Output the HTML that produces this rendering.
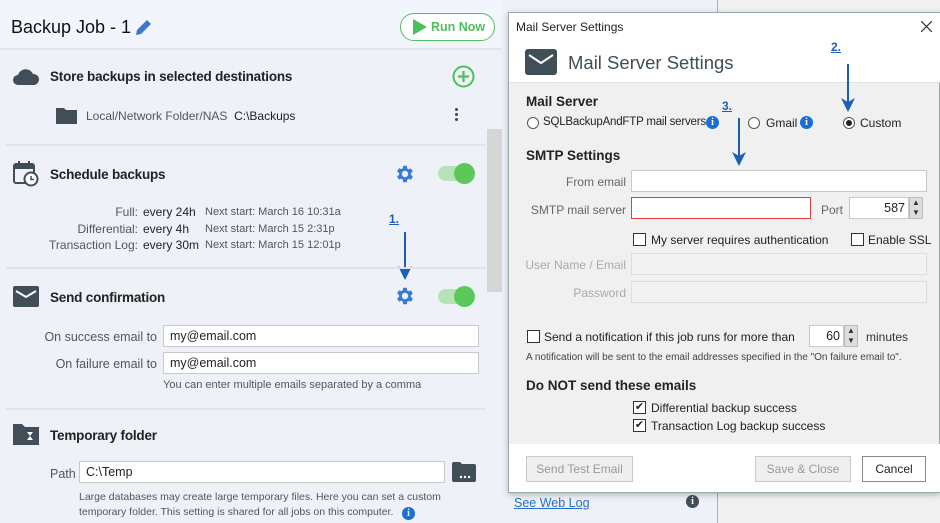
<!DOCTYPE html><html><head><style>
*{margin:0;padding:0;box-sizing:border-box}
body{width:940px;height:523px;position:relative;overflow:hidden;font-family:"Liberation Sans",sans-serif;background:#f0f0f0;color:#222}
.a{position:absolute}
.t{font-size:12px;color:#555;white-space:nowrap}
.h{font-size:13.5px;font-weight:bold;color:#222;white-space:nowrap;letter-spacing:-0.2px}
.inp{position:absolute;background:#fff;border:1px solid #c8c8c8;height:22px;font-size:12.5px;padding:3px 6px}
.sep{position:absolute;left:6px;width:480px;height:2px;background:#dfe4ea}
.dl{font-size:12px;color:#666;white-space:nowrap;text-align:right}
.cb{position:absolute;width:13px;height:13px;border:1px solid #333;background:#fff}
.rd{position:absolute;width:12px;height:12px;border:1px solid #555;border-radius:50%;background:#fff}
.info{position:absolute;width:13px;height:13px;border-radius:50%;background:#1a6fd0;color:#fff;font-size:10px;font-weight:bold;text-align:center;line-height:13px;font-family:"Liberation Serif",serif}
.btn{position:absolute;height:26px;border:1px solid #c9c9c9;background:#efefef;font-size:12px;color:#999;text-align:center;line-height:24px}
.spin{position:absolute;width:14px;background:#ddd;border:1px solid #bbb;font-size:8px;text-align:center;line-height:10px;color:#333}
.dt{font-size:12px;white-space:nowrap}
</style></head><body>
<div class="a" style="left:0;top:0;width:717px;height:523px;background:#eef2f8"></div>
<div class="a" style="left:717px;top:0;width:1px;height:523px;background:#9bb"></div>
<div class="a" style="left:0;top:0;width:502px;height:50px;background:#f2f5fb;border-bottom:2px solid #e1e5ea"></div>
<div class="a" style="left:11px;top:17px;font-size:18px;color:#111;white-space:nowrap">Backup Job - 1</div>
<svg class="a" style="left:134px;top:17px" width="20" height="20" viewBox="0 0 20 20"><path d="M2 18 L3 13 L13 3 L17 7 L7 17Z" fill="#3a78d4"/></svg>
<div class="a" style="left:400px;top:13px;width:95px;height:28px;border:1.5px solid #55c060;border-radius:14px;background:#fff"></div>
<svg class="a" style="left:413px;top:19px" width="14" height="16"><path d="M0 0 L14 8 L0 16Z" fill="#4fbf5a"/></svg>
<div class="a" style="left:431px;top:20px;font-size:12.5px;font-weight:bold;color:#4fbf5a">Run Now</div>
<div class="a" style="left:487px;top:52px;width:15px;height:471px;background:#eef2f8"></div>
<div class="a" style="left:487px;top:129px;width:15px;height:163px;background:#d6d6d6"></div>
<svg class="a" style="left:13px;top:67px" width="26" height="18"><path d="M5 18 A5 5 0 0 1 5 8 A8 8 0 0 1 20 7 A5.5 5.5 0 0 1 21 18Z" fill="#3f4e57"/></svg>
<div class="a h" style="left:50px;top:69px">Store backups in selected destinations</div>
<svg class="a" style="left:452px;top:65px" width="23" height="23"><circle cx="11.5" cy="11.5" r="10" fill="none" stroke="#4fbf5a" stroke-width="2"/><path d="M11.5 6v11M6 11.5h11" stroke="#4fbf5a" stroke-width="2.2"/></svg>
<svg class="a" style="left:56px;top:107px" width="21" height="17"><path d="M0 1h8l2 2h11v14H0Z" fill="#3f4e57"/></svg>
<div class="a t" style="left:86px;top:109px">Local/Network Folder/NAS&nbsp; <span style="color:#222">C:\Backups</span></div>
<div class="a" style="left:455px;top:108px;width:3px;height:3px;background:#444;border-radius:50%;box-shadow:0 5px #444,0 10px #444"></div>
<div class="sep" style="top:144px"></div>
<svg class="a" style="left:13px;top:161px" width="26" height="26"><rect x="1" y="3" width="20" height="19" rx="2" fill="none" stroke="#3f4e57" stroke-width="2"/><rect x="1" y="3" width="20" height="5" fill="#3f4e57"/><rect x="5" y="0" width="2" height="4" fill="#3f4e57"/><rect x="15" y="0" width="2" height="4" fill="#3f4e57"/><circle cx="18" cy="18" r="6.5" fill="#fff" stroke="#3f4e57" stroke-width="2"/><path d="M18 15v3.5h3" stroke="#3f4e57" stroke-width="1.5" fill="none"/></svg>
<div class="a h" style="left:50px;top:167px">Schedule backups</div>
<svg class="a" style="left:394px;top:163px" width="22" height="22" viewBox="0 0 24 24"><path fill="#3a7ad6" d="M19.4 13a7.5 7.5 0 0 0 0-2l2.1-1.6-2-3.5-2.5 1a7 7 0 0 0-1.7-1L15 3h-4l-.4 2.7a7 7 0 0 0-1.7 1l-2.5-1-2 3.5L6.6 11a7.5 7.5 0 0 0 0 2l-2.2 1.6 2 3.5 2.5-1a7 7 0 0 0 1.7 1L11 21h4l.4-2.7a7 7 0 0 0 1.7-1l2.5 1 2-3.5ZM13 15.5a3.5 3.5 0 1 1 0-7 3.5 3.5 0 0 1 0 7Z" transform="translate(-1 0)"/></svg>
<div class="a" style="left:438px;top:166px;width:36px;height:15px;border-radius:8px;background:#b6e3b5"></div>
<div class="a" style="left:454px;top:163px;width:21px;height:21px;border-radius:50%;background:#5cc85a"></div>
<div class="a t" style="left:0;width:138px;top:204px;text-align:right;line-height:16.5px">Full:<br>Differential:<br>Transaction Log:</div>
<div class="a t" style="left:143px;top:204px;color:#222;line-height:16.5px">every 24h<br>every 4h<br>every 30m</div>
<div class="a t" style="left:205px;top:204px;line-height:16.5px;font-size:11px">Next start: March 16 10:31a<br>Next start: March 15 2:31p<br>Next start: March 15 12:01p</div>
<div class="a" style="left:389px;top:212px;font-size:12px;font-weight:bold;color:#1a5fb4;text-decoration:underline">1.</div>
<div class="a" style="left:404px;top:232px;width:2px;height:40px;background:#1a5fb4"></div>
<svg class="a" style="left:398px;top:266px" width="14" height="14"><path d="M0 0L7 14L14 0L7 4Z" fill="#1a5fb4"/></svg>
<div class="sep" style="top:267px"></div>
<svg class="a" style="left:13px;top:286px" width="26" height="21"><rect width="26" height="21" rx="2" fill="#3f4e57"/><path d="M3 5l10 6 10-6" stroke="#fff" stroke-width="2" fill="none"/></svg>
<div class="a h" style="left:50px;top:290px">Send confirmation</div>
<svg class="a" style="left:394px;top:285px" width="22" height="22" viewBox="0 0 24 24"><path fill="#3a7ad6" d="M19.4 13a7.5 7.5 0 0 0 0-2l2.1-1.6-2-3.5-2.5 1a7 7 0 0 0-1.7-1L15 3h-4l-.4 2.7a7 7 0 0 0-1.7 1l-2.5-1-2 3.5L6.6 11a7.5 7.5 0 0 0 0 2l-2.2 1.6 2 3.5 2.5-1a7 7 0 0 0 1.7 1L11 21h4l.4-2.7a7 7 0 0 0 1.7-1l2.5 1 2-3.5ZM13 15.5a3.5 3.5 0 1 1 0-7 3.5 3.5 0 0 1 0 7Z" transform="translate(-1 0)"/></svg>
<div class="a" style="left:438px;top:289px;width:36px;height:15px;border-radius:8px;background:#b6e3b5"></div>
<div class="a" style="left:454px;top:286px;width:21px;height:21px;border-radius:50%;background:#5cc85a"></div>
<div class="a t" style="left:0;width:157px;text-align:right;top:330px;font-size:12.5px">On success email to</div>
<div class="inp" style="left:163px;top:325px;width:316px">my@email.com</div>
<div class="a t" style="left:0;width:157px;text-align:right;top:357px;font-size:12.5px">On failure email to</div>
<div class="inp" style="left:163px;top:352px;width:316px">my@email.com</div>
<div class="a t" style="left:163px;top:379px;font-size:11px">You can enter multiple emails separated by a comma</div>
<div class="sep" style="top:408px"></div>
<svg class="a" style="left:13px;top:424px" width="26" height="21"><path d="M0 0h9l3 3h14v18H0Z" fill="#3f4e57"/><path d="M14 8h6l-3 4 3 4h-6l3-4Z" fill="#fff"/></svg>
<div class="a h" style="left:50px;top:428px">Temporary folder</div>
<div class="a t" style="left:50px;top:467px;font-size:12.5px">Path</div>
<div class="inp" style="left:79px;top:461px;width:366px">C:\Temp</div>
<svg class="a" style="left:452px;top:462px" width="24" height="20"><path d="M0 2a2 2 0 0 1 2-2h6l2 2h12a2 2 0 0 1 2 2v14a2 2 0 0 1-2 2H2a2 2 0 0 1-2-2Z" fill="#3f4e57"/><circle cx="9" cy="15" r="1.2" fill="#fff"/><circle cx="13" cy="15" r="1.2" fill="#fff"/><circle cx="17" cy="15" r="1.2" fill="#fff"/></svg>
<div class="a t" style="left:79px;top:490px;font-size:10.5px;line-height:15px">Large databases may create large temporary files. Here you can set a custom<br>temporary folder. This setting is shared for all jobs on this computer.</div>
<div class="info" style="left:402px;top:507px">i</div>
<div class="a" style="left:514px;top:496px;font-size:12.5px;color:#2a6fc8;text-decoration:underline">See Web Log</div>
<div class="info" style="left:686px;top:495px;background:#3f4e57">i</div>
<div class="a" style="left:508px;top:12px;width:432px;height:481px;background:#f0f0f0;border:1px solid #9aa;box-shadow:0 2px 6px rgba(0,0,0,.25)"></div>
<div class="a" style="left:509px;top:13px;width:431px;height:70px;background:#fff;border-bottom:1px solid #e4e4e4"></div>
<div class="a" style="left:516px;top:20px;font-size:12px;color:#222">Mail Server Settings</div>
<svg class="a" style="left:921px;top:21px" width="11" height="11"><path d="M0 0L11 11M11 0L0 11" stroke="#333" stroke-width="1.2"/></svg>
<svg class="a" style="left:525px;top:49px" width="32" height="26"><rect width="32" height="26" rx="3" fill="#3f4e57"/><path d="M4 6l12 8 12-8" stroke="#fff" stroke-width="2" fill="none"/></svg>
<div class="a" style="left:568px;top:52px;font-size:18.5px;color:#3f4e57">Mail Server Settings</div>
<div class="a" style="left:831px;top:40px;font-size:12px;font-weight:bold;color:#1a5fb4;text-decoration:underline">2.</div>
<div class="a" style="left:847px;top:64px;width:2px;height:40px;background:#1a5fb4"></div>
<svg class="a" style="left:841px;top:98px" width="14" height="14"><path d="M0 0L7 14L14 0L7 4Z" fill="#1a5fb4"/></svg>
<div class="a" style="left:526px;top:94px;font-size:13.5px;font-weight:bold">Mail Server</div>
<div class="a" style="left:722px;top:99px;font-size:12px;font-weight:bold;color:#1a5fb4;text-decoration:underline">3.</div>
<div class="a" style="left:738px;top:118px;width:2px;height:40px;background:#1a5fb4"></div>
<svg class="a" style="left:732px;top:152px" width="14" height="14"><path d="M0 0L7 14L14 0L7 4Z" fill="#1a5fb4"/></svg>
<div class="rd" style="left:527px;top:117px"></div>
<div class="a dt" style="left:543px;top:116px;font-size:11.5px;letter-spacing:-0.2px">SQLBackupAndFTP mail servers</div>
<div class="info" style="left:706px;top:116px">i</div>
<div class="rd" style="left:748px;top:117px"></div>
<div class="a dt" style="left:766px;top:116px">Gmail</div>
<div class="info" style="left:800px;top:116px">i</div>
<div class="rd" style="left:843px;top:117px"><div style="width:6px;height:6px;margin:2px;border-radius:50%;background:#222"></div></div>
<div class="a dt" style="left:860px;top:116px">Custom</div>
<div class="a" style="left:526px;top:148px;font-size:13.5px;font-weight:bold">SMTP Settings</div>
<div class="a dl" style="left:510px;width:116px;top:175px">From email</div>
<div class="inp" style="left:631px;top:170px;width:296px"></div>
<div class="a dl" style="left:510px;width:116px;top:203px">SMTP mail server</div>
<div class="inp" style="left:631px;top:197px;width:180px;border-color:#e04040"></div>
<div class="a dl" style="left:815px;width:28px;top:203px">Port</div>
<div class="inp" style="left:849px;top:197px;width:60px;text-align:right;padding-right:3px">587</div>
<div class="spin" style="left:909px;top:197px;height:22px">▲<br>▼</div>
<div class="cb" style="left:633px;top:233px"></div>
<div class="a dt" style="left:651px;top:233px">My server requires authentication</div>
<div class="cb" style="left:851px;top:233px"></div>
<div class="a dt" style="left:868px;top:233px">Enable SSL</div>
<div class="a dl" style="left:510px;width:116px;top:258px;color:#aaa">User Name / Email</div>
<div class="inp" style="left:631px;top:253px;width:296px;background:#f2f2f2;border-color:#ddd"></div>
<div class="a dl" style="left:510px;width:116px;top:286px;color:#aaa">Password</div>
<div class="inp" style="left:631px;top:281px;width:296px;background:#f2f2f2;border-color:#ddd"></div>
<div class="cb" style="left:527px;top:330px"></div>
<div class="a dt" style="left:544px;top:330px">Send a notification if this job runs for more than</div>
<div class="inp" style="left:809px;top:325px;width:35px;text-align:right;padding-right:3px">60</div>
<div class="spin" style="left:844px;top:325px;height:22px">▲<br>▼</div>
<div class="a dt" style="left:866px;top:330px;color:#333">minutes</div>
<div class="a" style="left:526px;top:352px;font-size:10px;color:#444;white-space:nowrap">A notification will be sent to the email addresses specified in the "On failure email to".</div>
<div class="a" style="left:526px;top:378px;font-size:13.5px;font-weight:bold">Do NOT send these emails</div>
<div class="cb" style="left:633px;top:401px;font-size:11px;line-height:11px;text-align:center">✔</div>
<div class="a dt" style="left:651px;top:401px">Differential backup success</div>
<div class="cb" style="left:633px;top:419px;font-size:11px;line-height:11px;text-align:center">✔</div>
<div class="a dt" style="left:651px;top:419px">Transaction Log backup success</div>
<div class="a" style="left:509px;top:444px;width:431px;height:48px;background:#fff"></div>
<div class="btn" style="left:526px;top:456px;width:107px">Send Test Email</div>
<div class="btn" style="left:755px;top:456px;width:96px">Save &amp; Close</div>
<div class="btn" style="left:862px;top:456px;width:64px;background:#fff;border-color:#888;color:#222">Cancel</div>
</body></html>
